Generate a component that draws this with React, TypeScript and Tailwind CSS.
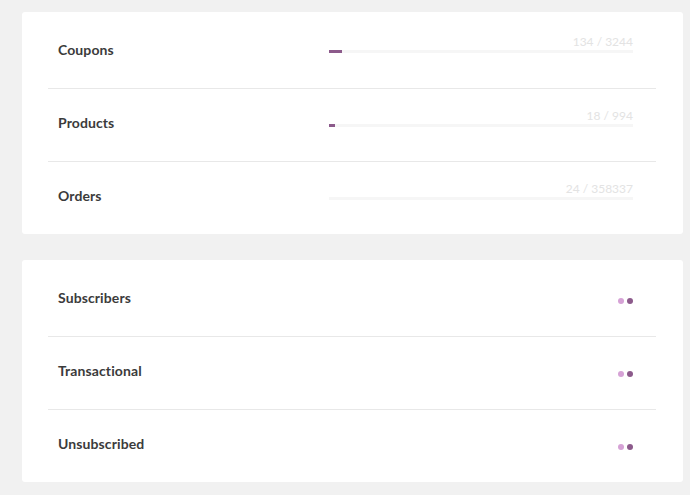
import React from "react";

type Usage = { label: string; used: number; total: number };

const usage: Usage[] = [
  { label: "Coupons", used: 134, total: 3244 },
  { label: "Products", used: 18, total: 994 },
  { label: "Orders", used: 24, total: 358337 },
];

const lists = ["Subscribers", "Transactional", "Unsubscribed"];

function Card({ children }: { children: React.ReactNode }) {
  return (
    <div className="ml-[22px] w-[661px] rounded-[3px] bg-white pt-[3px] pl-[26px] pr-[27px]">
      {children}
    </div>
  );
}

function Row({ first, children }: { first?: boolean; children: React.ReactNode }) {
  return (
    <div
      className={
        "flex h-[73px] items-center pl-[10px] pr-[23px] " +
        (first ? "" : "border-t border-[#e8e8e8]")
      }
    >
      {children}
    </div>
  );
}

function Dots() {
  return (
    <div className="ml-auto flex items-center gap-[3px] pt-[2px]">
      <span className="h-[6px] w-[6px] rounded-full bg-[#d6a2d6]" />
      <span className="h-[6px] w-[6px] rounded-full bg-[#8c5a8b]" />
    </div>
  );
}

export default function App() {
  return (
    <div
      className="min-h-[495px] bg-[#f1f1f1] pt-[12px]"
      style={{ fontFamily: "Lato, 'Open Sans', sans-serif" }}
    >
      <Card>
        {usage.map((u, i) => {
          const pct = Math.max((u.used / u.total) * 100, 0);
          return (
            <Row key={u.label} first={i === 0}>
              <span className="mb-[5px] text-[14px] font-bold tracking-[0.1px] text-[#3b3b3b]">
                {u.label}
              </span>
              <div className="relative ml-auto h-[3px] w-[304px] bg-[#f6f6f6]">
                <div className="h-full bg-[#8c5a8b]" style={{ width: pct + "%" }} />
                <span className="absolute bottom-[5px] right-0 text-[12px] leading-none text-[#e3e3e3]">
                  {u.used} / {u.total}
                </span>
              </div>
            </Row>
          );
        })}
      </Card>

      <div className="h-[26px]" />

      <Card>
        {lists.map((l, i) => (
          <Row key={l} first={i === 0}>
            <span className="mb-[5px] text-[14px] font-bold tracking-[0.1px] text-[#3b3b3b]">
              {l}
            </span>
            <Dots />
          </Row>
        ))}
      </Card>
    </div>
  );
}
